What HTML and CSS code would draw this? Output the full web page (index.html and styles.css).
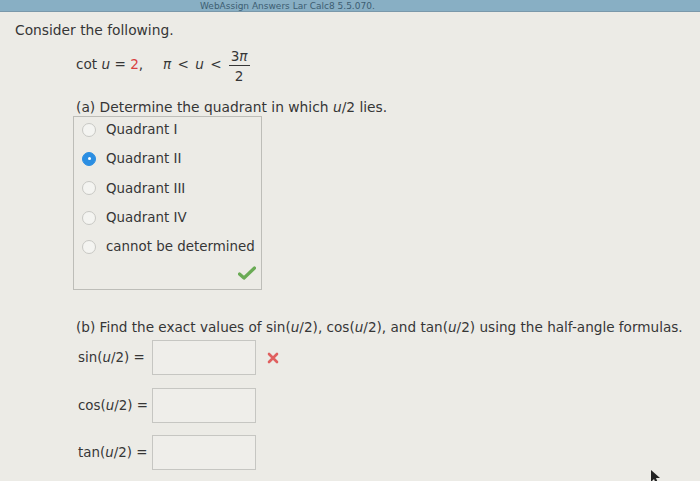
FILE: index.html
```html
<!DOCTYPE html>
<html>
<head>
<meta charset="utf-8">
<link rel="stylesheet" href="styles.css">
</head>
<body>
<div class="topbar"><span class="toptext">WebAssign Answers Lar Calc8 5.5.070.</span></div>
<div class="page">
  <p class="intro">Consider the following.</p>
  <div class="mathline">
    <span>cot <i>u</i> = <span class="red">2</span>,</span>
    <span class="ineq"><i>π</i> &lt; <i>u</i> &lt;</span>
    <span class="frac"><span class="num">3<i>π</i></span><span class="den">2</span></span>
  </div>
  <p class="part">(a) Determine the quadrant in which <i>u</i>/2 lies.</p>
  <div class="choices">
    <div class="opt"><span class="radio"></span><span>Quadrant I</span></div>
    <div class="opt"><span class="radio on"></span><span>Quadrant II</span></div>
    <div class="opt"><span class="radio"></span><span>Quadrant III</span></div>
    <div class="opt"><span class="radio"></span><span>Quadrant IV</span></div>
    <div class="opt"><span class="radio"></span><span>cannot be determined</span></div>
    <div class="checkrow">
      <svg width="18" height="14" viewBox="0 0 18 14"><path d="M1.5 8 L6 12 L16.5 2" fill="none" stroke="#6aab55" stroke-width="3.2" stroke-linecap="round" stroke-linejoin="round"/></svg>
    </div>
  </div>
  <p class="partb">(b) Find the exact values of sin(<i>u</i>/2), cos(<i>u</i>/2), and tan(<i>u</i>/2) using the half-angle formulas.</p>
  <div class="answers">
    <div class="arow"><span class="lbl">sin(<i>u</i>/2) =</span><span class="box"></span>
      <svg class="xmark" width="12" height="12" viewBox="0 0 12 12"><path d="M2 2 L10 10 M10 2 L2 10" stroke="#e0605f" stroke-width="2.6" stroke-linecap="round"/></svg>
    </div>
    <div class="arow"><span class="lbl">cos(<i>u</i>/2) =</span><span class="box"></span></div>
    <div class="arow"><span class="lbl">tan(<i>u</i>/2) =</span><span class="box"></span></div>
  </div>
  <svg class="cursor" width="12" height="16" viewBox="0 0 12 16"><path d="M1 1 L1 13 L4 10 L6 15 L8 14 L6 9 L10 9 Z" fill="#222"/></svg>
</div>
</body>
</html>
```
FILE: styles.css
```css
html, body {
  margin: 0;
  padding: 0;
  width: 700px;
  height: 481px;
  overflow: hidden;
  background: #ecebe6;
  font-family: "DejaVu Sans", Verdana, sans-serif;
  color: #363636;
}
.topbar {
  height: 11px;
  background: #88afc4;
  border-bottom: 1px solid #7a98aa;
  overflow: hidden;
  display: flex;
  align-items: center;
  padding-left: 200px;
}
.toptext {
  font-size: 9px;
  line-height: 10px;
  color: #3d5e72;
  white-space: nowrap;
}
.page {
  position: relative;
  height: 469px;
  padding: 10px 0 0 15px;
  box-sizing: border-box;
}
.intro {
  margin: 0;
  font-size: 13.8px;
}
.mathline {
  display: flex;
  align-items: center;
  gap: 20px;
  margin: 7px 0 0 61px;
  font-size: 13.6px;
  height: 38px;
}
.ineq { word-spacing: 2px; }
.red { color: #d9403f; }
.frac {
  display: inline-flex;
  flex-direction: column;
  align-items: center;
  margin-left: -13px;
  margin-top: 3px;
  line-height: 16px;
}
.num { border-bottom: 1px solid #363636; padding: 0 2px 1px; }
.den { padding-top: 2px; }
.part {
  margin: 16px 0 0 61px;
  font-size: 13.8px;
}
.choices {
  margin: 1px 0 0 58px;
  width: 189px;
  height: 174px;
  border: 1px solid #bdbdb8;
  box-sizing: border-box;
}
.opt {
  display: flex;
  align-items: center;
  gap: 10px;
  height: 29.3px;
  padding-left: 8px;
  font-size: 13.4px;
}
.opt:first-child { margin-top: -2px; }
.radio {
  width: 12px;
  height: 12px;
  border: 1px solid #c8c8c4;
  border-radius: 50%;
  background: #f4f4f1;
  flex: none;
}
.radio.on {
  background: #2b8ee2;
  border-color: #2b8ee2;
  position: relative;
}
.radio.on::after {
  content: "";
  position: absolute;
  left: 4.5px;
  top: 4.5px;
  width: 3px;
  height: 3px;
  border-radius: 50%;
  background: #fff;
}
.checkrow {
  display: flex;
  justify-content: flex-end;
  padding: 5px 5px 0 0;
}
.partb {
  margin: 29px 0 0 61px;
  font-size: 13.6px;
  white-space: nowrap;
}
.answers {
  margin: 5px 0 0 63px;
  display: flex;
  flex-direction: column;
  gap: 12.5px;
}
.arow {
  display: flex;
  align-items: center;
  font-size: 13.4px;
}
.lbl { width: 74px; }
.box {
  width: 102px;
  height: 33px;
  border: 1px solid #c6c6c2;
  background: #efeeea;
}
.xmark { margin-left: 11px; }
.cursor {
  position: absolute;
  left: 650px;
  top: 457px;
}
```
